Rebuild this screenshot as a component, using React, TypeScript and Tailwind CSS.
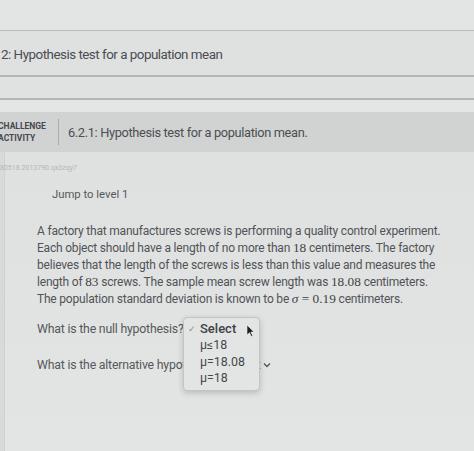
import React from "react";

const M: React.FC<{ children: React.ReactNode }> = ({ children }) => (
  <span className="font-['Liberation_Serif',serif] text-[13.3px] tracking-normal text-[#3f4246]">{children}</span>
);

export default function App() {
  return (
    <div className="relative w-[474px] h-[451px] overflow-hidden flex flex-col bg-[#dfe1e0] font-['Roboto',sans-serif] text-[#4d5055]">
      {/* top nav strip */}
      <div className="h-[31px] shrink-0 bg-[#e3e5e4] border-b border-[#b9bcbc]" />
      <div className="h-[46px] shrink-0 flex items-center border-b-2 border-[#b3b6b6] pl-[1px] pt-[4px]">
        <span className="text-[13.4px] text-[#4a4d52] tracking-[-0.5px]">2: Hypothesis test for a population mean</span>
      </div>
      <div className="h-[23px] shrink-0 bg-[#e0e2e1] border-b-2 border-[#b3b6b6]" />
      <div className="h-[12px] shrink-0 bg-[#e4e6e5]" />

      {/* challenge header */}
      <div className="h-[40px] shrink-0 flex items-center bg-[#d1d3d2]">
        <div className="-ml-[2px] w-[60px] flex flex-col leading-[12px] text-[8.5px] font-bold text-[#45484c]">
          <span>CHALLENGE</span>
          <span>ACTIVITY</span>
        </div>
        <div className="w-px h-[26px] bg-[#a9acad]" />
        <span className="ml-[9px] mt-[2px] text-[12.8px] tracking-[-0.35px] text-[#4b4e53]">6.2.1: Hypothesis test for a population mean.</span>
      </div>

      <div className="flex flex-1 bg-gradient-to-b from-[#dfe1e0] to-[#e3e5e4]">
        <div className="w-[5px] border-r border-[#cfd1d0] bg-[#d8dad9]" />
        <div className="flex-1 flex flex-col">
          <div className="-ml-[5px] mt-[11px] text-[7px] text-[#b3b6b8]">80518.2013790.qx3zqy7</div>
          <div className="ml-[47px] mt-[13px] text-[11.3px] text-[#55585d]">Jump to level 1</div>

          <p className="ml-[32px] mt-[20px] whitespace-nowrap text-[12px] leading-[16.9px] tracking-[-0.2px] text-[#505358]">
            A factory that manufactures screws is performing a quality control experiment.
            <br />
            Each object should have a length of no more than <M>18</M> centimeters. The factory
            <br />
            believes that the length of the screws is less than this value and measures the
            <br />
            length of <M>83</M> screws. The sample mean screw length was <M>18.08</M> centimeters.
            <br />
            The population standard deviation is known to be <M><i>σ</i> = 0.19</M> centimeters.
          </p>

          <div className="relative ml-[32px] mt-[12px] flex flex-col gap-[18px] text-[12.3px] tracking-[-0.2px] text-[#55585c]">
            <div className="flex items-center h-[18px]">
              <span>What is the null hypothesis?</span>
              <span className="ml-[6px] flex items-center gap-[3px]">
                Select
                <svg width="8" height="6" viewBox="0 0 8 6"><path d="M1 1.5l3 3 3-3" fill="none" stroke="#55585c" strokeWidth="1.4" /></svg>
              </span>
            </div>
            <div className="flex items-center h-[18px]">
              <span>What is the alternative hypothesis?</span>
              <span className="ml-[8px] flex items-center gap-[3px]">
                Select
                <svg width="8" height="6" viewBox="0 0 8 6"><path d="M1 1.5l3 3 3-3" fill="none" stroke="#55585c" strokeWidth="1.4" /></svg>
              </span>
            </div>

            {/* open dropdown menu */}
            <div className="absolute left-[146px] -top-[3px] w-[77px] h-[74px] rounded-[4px] border border-[#c2c5c5] bg-[#e3e5e4] shadow-[0_2px_6px_rgba(0,0,0,0.18)] flex flex-col pt-[3px] text-[12.4px] leading-[16.5px] tracking-normal text-[#45484c]">
              <div className="flex items-center">
                <span className="w-[16px] text-center text-[9px] text-[#8c9093]">✓</span>
                <span className="text-[13px] font-medium text-[#3f4246]">Select</span>
              </div>
              <span className="pl-[16px]">μ≤18</span>
              <span className="pl-[16px]">μ=18.08</span>
              <span className="pl-[16px]">μ=18</span>
            </div>

            {/* mouse pointer */}
            <svg className="absolute left-[209px] top-[4px]" width="9" height="13" viewBox="0 0 9 13">
              <path d="M1 1v10l2.5-2.3 1.8 3.8 1.4-.7-1.8-3.7H8z" fill="#1e1f21" stroke="#f2f2f2" strokeWidth="0.6" />
            </svg>
          </div>
        </div>
      </div>
    </div>
  );
}
